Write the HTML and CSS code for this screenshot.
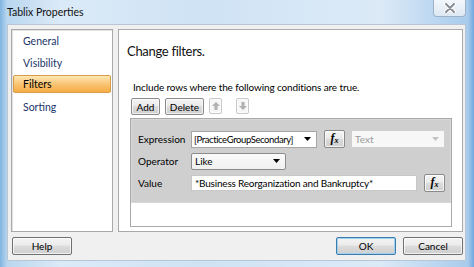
FILE: index.html
```html
<!DOCTYPE html>
<html>
<head>
    <title>Tablix Properties</title>
    <link rel="stylesheet" href="styles.css">
</head>
<body>
    <div class="window">
        <div class="titlebar">
            <span class="title">Tablix Properties</span>
            <div class="close-btn">
                <svg width="12" height="10" viewBox="0 0 12 10">
                    <path d="M2 1 L10 9 M10 1 L2 9" stroke="#fff" stroke-width="4" stroke-linecap="round"/>
                    <path d="M2 1 L10 9 M10 1 L2 9" stroke="#8a8f96" stroke-width="2" stroke-linecap="round"/>
                </svg>
            </div>
        </div>
        <div class="client">
            <div class="main">
                <ul class="nav">
                    <li>General</li>
                    <li>Visibility</li>
                    <li class="active">Filters</li>
                    <li>Sorting</li>
                </ul>
                <div class="content">
                    <h1 class="heading">Change filters.</h1>
                    <p class="hint">Include rows where the following conditions are true.</p>
                    <div class="toolbar">
                        <button class="btn small">Add</button>
                        <button class="btn small">Delete</button>
                        <button class="btn icon-btn">
                            <svg width="8" height="8" viewBox="0 0 8 8"><path d="M4 0 L8 4 L5.5 4 L5.5 8 L2.5 8 L2.5 4 L0 4 Z" fill="#b0b0b0"/></svg>
                        </button>
                        <button class="btn icon-btn">
                            <svg width="8" height="8" viewBox="0 0 8 8"><path d="M4 8 L8 4 L5.5 4 L5.5 0 L2.5 0 L2.5 4 L0 4 Z" fill="#b0b0b0"/></svg>
                        </button>
                    </div>
                    <div class="filter-box">
                        <div class="filter-row">
                            <div class="row">
                                <span class="label">Expression</span>
                                <div class="combo expr">
                                    <span class="combo-text">[PracticeGroupSecondary]</span>
                                    <svg width="7" height="4" viewBox="0 0 7 4"><path d="M0 0 L7 0 L3.5 4 Z" fill="#000"/></svg>
                                </div>
                                <button class="btn fx">f<sub>x</sub></button>
                                <div class="combo type disabled">
                                    <span class="combo-text">Text</span>
                                    <svg width="7" height="4" viewBox="0 0 7 4"><path d="M0 0 L7 0 L3.5 4 Z" fill="#c4c4c4"/></svg>
                                </div>
                            </div>
                            <div class="row">
                                <span class="label">Operator</span>
                                <div class="combo op">
                                    <span class="combo-text">Like</span>
                                    <svg width="7" height="4" viewBox="0 0 7 4"><path d="M0 0 L7 0 L3.5 4 Z" fill="#000"/></svg>
                                </div>
                            </div>
                            <div class="row">
                                <span class="label">Value</span>
                                <div class="textbox">*Business Reorganization and Bankruptcy*</div>
                                <button class="btn fx">f<sub>x</sub></button>
                            </div>
                        </div>
                    </div>
                </div>
            </div>
            <div class="footer">
                <button class="btn big">Help</button>
                <div class="footer-right">
                    <button class="btn big default">OK</button>
                    <button class="btn big">Cancel</button>
                </div>
            </div>
        </div>
    </div>
</body>
</html>
```

FILE: styles.css
```css
body {
    margin: 0;
    width: 474px;
    height: 267px;
    overflow: hidden;
    font-family: Lato, "Open Sans", sans-serif;
    color: #000;
    background: linear-gradient(90deg, #7fb3e0 0px, #b9d6ef 7px, #dbeaf7 60px, #cfe3f5 200px, #dceaf7 380px, #a8cbec 468px, #6fa7dc 474px);
}
.window {
    display: flex;
    flex-direction: column;
    height: 267px;
}
.titlebar {
    height: 24px;
    display: flex;
    align-items: flex-start;
    justify-content: space-between;
    padding: 0 8px 0 7px;
}
.title {
    font-size: 10.5px;
    color: #111;
    margin-top: 6px;
}
.close-btn {
    width: 33px;
    height: 17px;
    box-sizing: border-box;
    border: 1px solid #9fb3c8;
    border-top: none;
    border-radius: 0 0 4px 4px;
    background: linear-gradient(#f2f7fc, #dde8f3);
    display: flex;
    justify-content: center;
    align-items: center;
}
.client {
    margin: 0 8px 6px 7px;
    flex: 1;
    background: #f0f0f0;
    border: 1px solid #b8c6d4;
    padding: 4px 2px 4px 3px;
    display: flex;
    flex-direction: column;
}
.main {
    display: flex;
    gap: 5px;
    height: 203px;
}
.nav {
    list-style: none;
    margin: 0;
    padding: 1px 1px;
    width: 100px;
    background: #fff;
    border: 1px solid #a9a9a9;
    box-shadow: inset 1px 1px 0 #e2e2e2;
}
.nav li {
    font-size: 10.5px;
    color: #1a3668;
    height: 21px;
    line-height: 21px;
    padding-left: 10px;
    margin-bottom: 1px;
}
.nav li.active {
    height: 16px;
    line-height: 16px;
    margin: 0 0 4px;
    color: #000;
    background: linear-gradient(#fde7b4, #f9c270 55%, #f7ad44);
    border: 1px solid #d89b46;
    border-radius: 2px;
    padding-left: 9px;
}
.content {
    flex: 1;
    background: #fff;
    border: 1px solid #a9a9a9;
    padding: 0 10px 0 11px;
}
.heading {
    font-size: 13px;
    font-weight: normal;
    color: #111;
    margin: 13px 0 0 -3px;
    letter-spacing: -0.3px;
}
.hint {
    font-size: 10px;
    margin: 22px 0 0 3px;
    letter-spacing: -0.12px;
}
.toolbar {
    display: flex;
    gap: 5px;
    margin-top: 5px;
    padding-left: 1px;
}
.btn {
    font-family: inherit;
    font-size: 10px;
    color: #000;
    background: linear-gradient(#f4f4f4, #ebebeb 45%, #dcdcdc 50%, #cfcfcf);
    border: 1px solid #8a8a8a;
    border-radius: 2px;
    padding: 0;
    box-shadow: inset 0 0 0 1px rgba(255, 255, 255, 0.7);
}
.btn.small {
    height: 17px;
    line-height: 14px;
}
.toolbar .btn.small:first-child {
    width: 29px;
}
.toolbar .btn.small:nth-child(2) {
    width: 39px;
}
.icon-btn {
    width: 13px;
    height: 16px;
    border-color: #c8c8c8;
    background: #f6f6f6;
    display: flex;
    align-items: center;
    justify-content: center;
}
.icon-btn + .icon-btn {
    margin-left: 9px;
}
.filter-box {
    margin-top: 3px;
    width: 320px;
    height: 107px;
    border: 1px solid #a9a9a9;
    background: #fff;
}
.filter-row {
    background: #cfcfcf;
    height: 84px;
    border: 1px solid #d8d8d8;
    padding: 10px 0 0 6px;
    box-sizing: border-box;
}
.row {
    display: flex;
    align-items: center;
    height: 18px;
    margin-bottom: 4px;
}
.label {
    font-size: 10px;
    width: 53px;
}
.combo {
    height: 17px;
    box-sizing: border-box;
    background: #fff;
    border: 1px solid #8c8c8c;
    display: flex;
    align-items: center;
    justify-content: space-between;
    gap: 4px;
    padding: 0 5px 0 3px;
    font-size: 10px;
}
.combo-text {
    white-space: nowrap;
}
.combo svg {
    flex-shrink: 0;
}
.combo.expr {
    width: 126px;
    border-color: #a6a6a6;
    font-size: 9.5px;
    letter-spacing: -0.4px;
    padding-left: 2px;
}
.combo.op {
    width: 95px;
    border-radius: 2px;
    background: linear-gradient(#fafafa, #f0f0f0);
}
.combo.type {
    width: 94px;
    margin-left: 6px;
    border-color: #d0d0d0;
    background: #f7f7f7;
    color: #9a9a9a;
    height: 18px;
}
.textbox {
    width: 226px;
    height: 16px;
    box-sizing: border-box;
    background: #fff;
    border: 1px solid #c8c8c8;
    font-size: 10px;
    line-height: 14px;
    padding-left: 3px;
    letter-spacing: -0.2px;
}
.btn.fx {
    width: 21px;
    height: 18px;
    margin-left: 7px;
    font-family: "Liberation Serif", serif;
    font-style: italic;
    font-weight: bold;
    font-size: 12px;
    line-height: 14px;
}
.btn.fx sub {
    font-size: 8px;
    vertical-align: -1px;
}
.footer {
    display: flex;
    justify-content: space-between;
    margin-top: 5px;
    padding-left: 1px;
}
.footer-right {
    display: flex;
    gap: 7px;
}
.btn.big {
    width: 60px;
    height: 18px;
    border-color: #707070;
}
.btn.default {
    border-color: #3d7bad;
    box-shadow: inset 0 0 0 1px #9ed2f0;
}
```
